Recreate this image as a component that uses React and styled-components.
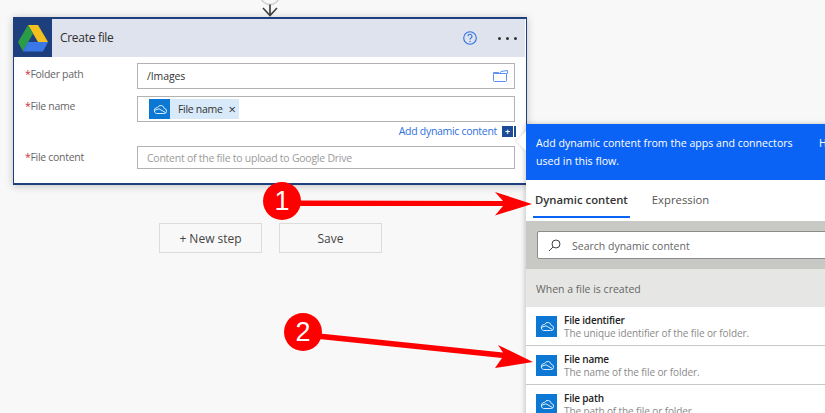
import React from "react";
import styled, { createGlobalStyle } from "styled-components";

const Global = createGlobalStyle`
  html, body { margin: 0; padding: 0; background: #f8f8f8; }
  #root { width: 825px; height: 413px; overflow: hidden; }
  * { box-sizing: border-box; }
`;

const FONT = `"Open Sans", "Noto Sans", "Liberation Sans", sans-serif`;

const Page = styled.div`
  position: relative;
  width: 825px;
  height: 413px;
  overflow: hidden;
  background: #f8f8f8;
  font-family: ${FONT};
  color: #333;
`;

const Flow = styled.div`
  display: flex;
  flex-direction: column;
  align-items: flex-start;
  padding: 0 0 0 13px;
`;

const Connector = styled.svg`
  display: block;
  margin-left: 245px;
  height: 17px;
  width: 24px;
`;

const Card = styled.section`
  width: 514px;
  height: 168px;
  background: #fff;
  border: 1px solid #1d3f7e;
  border-top-width: 2px;
  border-bottom-width: 2px;
  box-shadow: 0 1px 8px rgba(0, 0, 0, 0.22);
`;

const CardHeader = styled.header`
  display: flex;
  align-items: center;
  height: 38px;
  background: #dfe3ee;
  margin-right: 1px;
`;

const LogoBox = styled.div`
  width: 38px;
  height: 38px;
  background: #1d3f7e;
  display: flex;
  align-items: center;
  justify-content: center;
`;

const CardTitle = styled.h2`
  margin: 0 0 0 8px;
  flex: 1;
  font-size: 12px;
  font-weight: 400;
  letter-spacing: -0.3px;
  color: #303030;
  line-height: 38px;
`;

const HelpIcon = styled.svg`
  width: 16px;
  height: 16px;
  margin-right: 20px;
`;

const Dots = styled.div`
  display: flex;
  gap: 5px;
  margin-right: 8px;
`;

const Dot = styled.span`
  width: 3px;
  height: 3px;
  border-radius: 50%;
  background: #333;
`;

const CardBody = styled.div`
  display: flex;
  flex-direction: column;
  padding: 6px 11px 0 11px;
`;

const FieldRow = styled.div`
  display: flex;
  align-items: flex-start;
  margin-bottom: ${(p) => p.$mb || 0}px;
`;

const Label = styled.label`
  width: 112px;
  padding-top: ${(p) => p.$pt ?? 4}px;
  font-size: 10.5px;
  line-height: 14px;
  letter-spacing: -0.3px;
  color: #666;
  &::before {
    content: "*";
    color: #c4314b;
    margin-right: 0;
  }
`;

const Input = styled.div`
  flex: 1;
  display: flex;
  align-items: center;
  height: ${(p) => p.$h || 26}px;
  padding: 0 6px 0 ${(p) => p.$pl || 9}px;
  border: 1px solid #b2b2b2;
  background: #fff;
  font-size: 10.5px;
  letter-spacing: ${(p) => (p.$placeholder ? -0.25 : -0.1)}px;
  color: ${(p) => (p.$placeholder ? "#9a9a9a" : "#333")};
`;

const InputText = styled.span`
  flex: 1;
`;

const Chip = styled.div`
  display: flex;
  align-items: center;
  height: 20px;
  width: 90px;
  background: #d8e9f9;
  font-size: 10.5px;
  letter-spacing: -0.3px;
  color: #333;
`;

const ChipIcon = styled.div`
  width: 21px;
  height: 20px;
  background: #0c78d4;
  display: flex;
  align-items: center;
  justify-content: center;
  margin-right: 8px;
`;

const ChipClose = styled.span`
  margin-left: 6px;
  font-size: 13px;
  line-height: 1;
`;

const DynamicRow = styled.div`
  display: flex;
  align-items: center;
  justify-content: flex-end;
  gap: 5px;
  height: 24px;
  padding-bottom: 6px;
  margin-right: -1px;
  font-size: 10.5px;
  letter-spacing: -0.3px;
  color: #2f6fe0;
`;

const PlusBox = styled.div`
  position: relative;
  display: flex;
  align-items: center;
  justify-content: center;
  width: 11px;
  height: 11px;
  margin-right: 3px;
  background: #1c4c96;
  color: #fff;
  font-size: 9px;
  line-height: 1;
  font-weight: 700;
  &::after {
    content: "";
    position: absolute;
    left: 12px;
    top: 0;
    width: 2px;
    height: 11px;
    background: #1c4c96;
  }
`;

const Actions = styled.div`
  display: flex;
  gap: 17px;
  margin: 38px 0 0 146px;
`;

const Button = styled.button`
  width: 103px;
  height: 30px;
  padding: 0;
  border: 1px solid #dcdcdc;
  background: #f8f8f8;
  font: 400 12px ${FONT};
  color: #444;
`;

const Panel = styled.aside`
  position: absolute;
  left: 526px;
  top: 124px;
  width: 320px;
  height: 300px;
  background: #fff;
  box-shadow: -1px 0 5px rgba(0, 0, 0, 0.22);
  &::before {
    content: "";
    position: absolute;
    left: -7px;
    top: 10px;
    width: 14px;
    height: 14px;
    background: #fff;
    transform: rotate(45deg);
    box-shadow: -1px 1px 2px rgba(0, 0, 0, 0.1);
  }
`;

const PanelHero = styled.div`
  position: relative;
  display: flex;
  justify-content: space-between;
  height: 56px;
  padding: 11px 0 0 10px;
  background: #0b63f6;
  color: #fff;
  font-size: 10.6px;
  line-height: 17.5px;
`;

const HeroText = styled.p`
  margin: 0;
  width: 265px;
`;

const HeroHint = styled.span`
  position: absolute;
  left: 293px;
  top: 11px;
`;

const Tabs = styled.nav`
  display: flex;
  gap: 20px;
  height: 41px;
  padding-left: 7px;
`;

const Tab = styled.div`
  height: 38px;
  padding: 11px 2px 0;
  font-size: 11.3px;
  line-height: 18px;
  font-weight: ${(p) => (p.$active ? 600 : 400)};
  color: ${(p) => (p.$active ? "#333" : "#555")};
  border-bottom: ${(p) => (p.$active ? "2px solid #0b63f6" : "none")};
`;

const SearchWrap = styled.div`
  height: 48px;
  padding: 10px 0 0 11px;
  background: #c8c9c5;
`;

const SearchBox = styled.div`
  display: flex;
  align-items: center;
  gap: 11px;
  height: 28px;
  padding: 1px 0 0 10px;
  background: #fff;
  border: 1px solid #8c8c8c;
  border-radius: 2px;
  font-size: 10.5px;
  color: #666;
`;

const GroupHeader = styled.div`
  height: 38px;
  padding: 1px 0 0 10px;
  background: #e6e7e4;
  font-size: 10.5px;
  line-height: 38px;
  color: #666;
`;

const ItemList = styled.ul`
  margin: 0;
  padding: 0;
  list-style: none;
`;

const Item = styled.li`
  display: flex;
  gap: 7px;
  height: 39px;
  padding: 9px 0 0 10px;
  border-bottom: 1px solid #c8c8c8;
`;

const ItemIcon = styled.div`
  flex: none;
  width: 21px;
  height: 21px;
  background: #0c78d4;
  display: flex;
  align-items: center;
  justify-content: center;
`;

const ItemText = styled.div`
  margin-top: -3px;
`;

const ItemTitle = styled.div`
  font-size: 10px;
  line-height: 14px;
  font-weight: 600;
  letter-spacing: -0.2px;
  color: #222;
`;

const ItemDesc = styled.div`
  font-size: 10px;
  line-height: 13px;
  letter-spacing: -0.1px;
  color: #8a8a8a;
`;

const Annotations = styled.svg`
  position: absolute;
  left: 0;
  top: 0;
  width: 825px;
  height: 413px;
  pointer-events: none;
`;

const Badge = styled.div`
  position: absolute;
  left: ${(p) => p.$x - 19}px;
  top: ${(p) => p.$y - 19}px;
  width: 38px;
  height: 38px;
  border-radius: 50%;
  background: #fe0000;
  color: #fff;
  display: flex;
  align-items: center;
  justify-content: center;
  font: 400 27px "Liberation Sans", sans-serif;
`;

const Cloud = () => (
  <svg width="14" height="11" viewBox="0 0 14 11" fill="none" stroke="#dcecfa" strokeWidth="1">
    <path d="M3.300 9.500h7.500a2.500 2.500 0 0 0 .5-5 3.600 3.600 0 0 0-6.800-1A3.100 3.100 0 0 0 3.300 9.500z" />
    <path d="M1 6.500l5-1.700 6.500 3.800" />
  </svg>
);

const Drive = () => (
  <svg width="30" height="27" viewBox="0 0 30 27">
    <path d="M10 0h10l10 17H20z" fill="#f4c01e" />
    <path d="M10 0l5 8.500L5 26.500 0 17z" fill="#2a9b47" />
    <path d="M10 17h20l-5 9.500H5z" fill="#3b78e7" />
  </svg>
);

const items = [
  ["File identifier", "The unique identifier of the file or folder."],
  ["File name", "The name of the file or folder."],
  ["File path", "The path of the file or folder."],
];

export default function App() {
  return (
    <Page>
      <Global />
      <Flow>
        <Connector viewBox="0 0 24 17" fill="none">
          <circle cx="12" cy="-5" r="9.500" stroke="#cfcfcf" strokeWidth="1.500" />
          <path d="M12 4.500v11M5 8l7 7.500L19 8" stroke="#444" strokeWidth="1.700" />
        </Connector>
        <Card>
          <CardHeader>
            <LogoBox>
              <Drive />
            </LogoBox>
            <CardTitle>Create file</CardTitle>
            <HelpIcon viewBox="0 0 16 16" fill="none">
              <circle cx="8" cy="8" r="6.300" stroke="#2f6fe0" strokeWidth="1.100" />
              <path d="M6 6.300a2 2 0 1 1 3 1.700c-.7.400-1 .8-1 1.600" stroke="#2f6fe0" strokeWidth="1.100" />
              <circle cx="8" cy="11.500" r=".7" fill="#2f6fe0" />
            </HelpIcon>
            <Dots>
              <Dot />
              <Dot />
              <Dot />
            </Dots>
          </CardHeader>
          <CardBody>
            <FieldRow $mb={7}>
              <Label>Folder path</Label>
              <Input>
                <InputText>/Images</InputText>
                <svg width="15" height="12" viewBox="0 0 15 12" fill="none" stroke="#5b8ff0">
                  <path d="M.5 4.500a1 1 0 0 1 1-1h12v7a1 1 0 0 1-1 1h-11a1 1 0 0 1-1-1z" />
                  <path d="M.5 4V2.500h5l1 1M6.500 3.500L8 1.500l6.500-1v3" />
                </svg>
              </Input>
            </FieldRow>
            <FieldRow>
              <Label $pt={3}>File name</Label>
              <Input $pl={11}>
                <Chip>
                  <ChipIcon>
                    <Cloud />
                  </ChipIcon>
                  File name
                  <ChipClose>×</ChipClose>
                </Chip>
              </Input>
            </FieldRow>
            <DynamicRow>
              Add dynamic content
              <PlusBox>+</PlusBox>
            </DynamicRow>
            <FieldRow>
              <Label>File content</Label>
              <Input $placeholder $h={23}>
                Content of the file to upload to Google Drive
              </Input>
            </FieldRow>
          </CardBody>
        </Card>
        <Actions>
          <Button>+ New step</Button>
          <Button>Save</Button>
        </Actions>
      </Flow>

      <Panel>
        <PanelHero>
          <HeroText>Add dynamic content from the apps and connectors used in this flow.</HeroText>
          <HeroHint>H</HeroHint>
        </PanelHero>
        <Tabs>
          <Tab $active>Dynamic content</Tab>
          <Tab>Expression</Tab>
        </Tabs>
        <SearchWrap>
          <SearchBox>
            <svg width="13" height="13" viewBox="0 0 13 13" fill="none" stroke="#444">
              <circle cx="8" cy="5" r="4" />
              <path d="M5 8l-4 4" />
            </svg>
            Search dynamic content
          </SearchBox>
        </SearchWrap>
        <GroupHeader>When a file is created</GroupHeader>
        <ItemList>
          {items.map(([title, desc]) => (
            <Item key={title}>
              <ItemIcon>
                <Cloud />
              </ItemIcon>
              <ItemText>
                <ItemTitle>{title}</ItemTitle>
                <ItemDesc>{desc}</ItemDesc>
              </ItemText>
            </Item>
          ))}
        </ItemList>
      </Panel>

      <Annotations viewBox="0 0 825 413" fill="#fe0000">
        <path d="M298 200.500L503 201 495 192 532 204 495 215.500 503 206 298 206z" />
        <path d="M320 333.500L503 352.500 498 345 533 362 495 368 502 358 319 339z" />
      </Annotations>
      <Badge $x={282} $y={201}>1</Badge>
      <Badge $x={303} $y={332}>2</Badge>
    </Page>
  );
}
